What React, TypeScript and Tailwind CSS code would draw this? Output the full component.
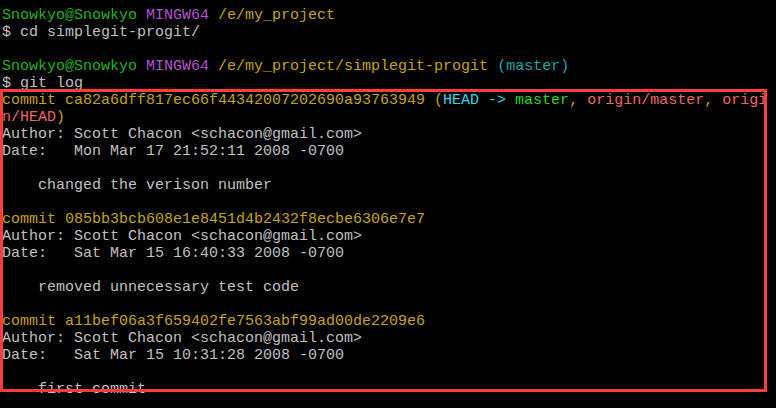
const FG = 'text-[#c0c0c0]';
const YEL = 'text-[#c4a600]';

interface Commit {
  hash: string;
  refs?: boolean;
  date: string;
  msg: string;
}

const COMMITS: Commit[] = [
  { hash: 'ca82a6dff817ec66f44342007202690a93763949', refs: true, date: 'Mon Mar 17 21:52:11 2008 -0700', msg: 'changed the verison number' },
  { hash: '085bb3bcb608e1e8451d4b2432f8ecbe6306e7e7', date: 'Sat Mar 15 16:40:33 2008 -0700', msg: 'removed unnecessary test code' },
  { hash: 'a11bef06a3f659402fe7563abf99ad00de2209e6', date: 'Sat Mar 15 10:31:28 2008 -0700', msg: 'first commit' },
];

function Prompt({ path, branch }: { path: string; branch?: string }) {
  return (
    <div>
      <span className="text-[#1cb51c]">Snowkyo@Snowkyo</span>{' '}
      <span className="text-[#b650d2]">MINGW64</span>{' '}
      <span className="text-[#c4a600]">{path}</span>
      {branch && <span className="text-[#14aaaa]"> ({branch})</span>}
    </div>
  );
}

export default function App() {
  return (
    <div className="relative w-[776px] h-[408px] overflow-hidden bg-black">
      <div
        className={`pt-[7px] pl-[2px] text-[15px] leading-[17px] whitespace-pre ${FG}`}
        style={{ fontFamily: '"Liberation Mono", monospace' }}
      >
        <Prompt path="/e/my_project" />
        <div>$ cd simplegit-progit/</div>
        <div>&nbsp;</div>
        <Prompt path="/e/my_project/simplegit-progit" branch="master" />
        <div>$ git log</div>
        {COMMITS.map((c, i) => (
          <div key={c.hash}>
            {i > 0 && <div>&nbsp;</div>}
            {c.refs ? (
              <>
                <div className={YEL}>
                  commit {c.hash} (<span className="text-[#2ad6e8]">HEAD -&gt; </span>
                  <span className="text-[#22d822]">master</span>, <span className="text-[#f06464]">origin/master</span>,{' '}
                  <span className="text-[#f06464]">origi</span>
                </div>
                <div className={YEL}>
                  <span className="text-[#f06464]">n/HEAD</span>)
                </div>
              </>
            ) : (
              <div className={YEL}>commit {c.hash}</div>
            )}
            <div>Author: Scott Chacon &lt;schacon@gmail.com&gt;</div>
            <div>Date:   {c.date}</div>
            <div>&nbsp;</div>
            <div>    {c.msg}</div>
          </div>
        ))}
      </div>
      {/* annotation box */}
      <div className="absolute left-0 top-[89px] w-[767px] h-[303px] border-[3px] border-[#ff3c3c]" />
    </div>
  );
}
